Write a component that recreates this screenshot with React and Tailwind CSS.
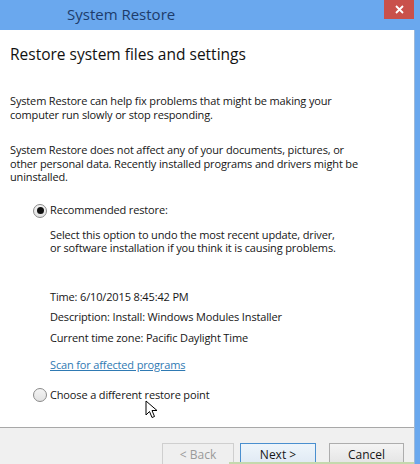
import React from "react";

function Radio({ checked }) {
  return (
    <span className="w-[14px] h-[14px] rounded-full border border-[#8a8a8a] bg-gradient-to-b from-[#f4f4f4] to-[#e2e2e2] flex items-center justify-center shrink-0">
      {checked && <span className="w-[7px] h-[7px] rounded-full bg-[#111]" />}
    </span>
  );
}

export default function App() {
  return (
    <div
      className="w-[420px] h-[464px] relative overflow-hidden bg-[#6aa8ee] flex flex-col text-[#161616]"
      style={{ fontFamily: '"Open Sans", "Noto Sans", sans-serif' }}
    >
      {/* title bar */}
      <div className="h-[30px] shrink-0 flex items-start pl-[67px] pt-[2px]">
        <span className="text-[15px] leading-[24px] text-[#1d3c6b]">System Restore</span>
      </div>
      <div className="absolute right-[6px] top-0 w-[30px] h-[19px] bg-[#c9514b] flex items-center justify-center">
        <svg width="9" height="9" viewBox="0 0 9 9">
          <path d="M1 1 L8 8 M8 1 L1 8" stroke="#fff" strokeWidth="1.8" />
        </svg>
      </div>

      {/* body */}
      <div className="flex-1 flex min-h-0">
        <div className="flex-1 flex flex-col bg-white border-r border-[#9eb9d8] min-w-0">
          <div className="flex-1 flex flex-col pl-[10px] text-[11px] tracking-[-0.15px]">
            <h1 className="mt-[14px] text-[15.5px] leading-[20px] tracking-normal text-[#111]">Restore system files and settings</h1>
            <p className="mt-[30px] leading-[13.5px]">
              System Restore can help fix problems that might be making your
              <br />
              computer run slowly or stop responding.
            </p>
            <p className="mt-[22px] leading-[13.5px]">
              System Restore does not affect any of your documents, pictures, or
              <br />
              other personal data. Recently installed programs and drivers might be
              <br />
              uninstalled.
            </p>
            <div className="mt-[19px] ml-[23px] h-[16px] flex items-center gap-[3px]">
              <Radio checked />
              <span>Recommended restore:</span>
            </div>
            <p className="mt-[9px] ml-[40px] leading-[13.5px]">
              Select this option to undo the most recent update, driver,
              <br />
              or software installation if you think it is causing problems.
            </p>
            <div className="mt-[32px] ml-[40px] leading-[20.5px]">
              <div>Time: 6/10/2015 8:45:42 PM</div>
              <div>Description: Install: Windows Modules Installer</div>
              <div>Current time zone: Pacific Daylight Time</div>
            </div>
            <div className="mt-[7px] ml-[40px] leading-[20px] text-[#2f7ab3] underline">
              Scan for affected programs
            </div>
            <div className="mt-[12px] ml-[23px] h-[16px] flex items-center gap-[3px] relative">
              <Radio />
              <span>Choose a different restore point</span>
              <svg className="absolute left-[112px] top-[13px]" width="13" height="20" viewBox="0 0 13 20">
                <path
                  d="M1 1 L1 15 L4.5 11.5 L7 17.5 L9.5 16.5 L7 10.5 L12 10.5 Z"
                  fill="#fff"
                  stroke="#000"
                  strokeWidth="1"
                  strokeLinejoin="miter"
                />
              </svg>
            </div>
          </div>
          <div className="h-[1px] bg-[#a8a8a8]" />
          <div className="h-[36px] shrink-0 bg-[#f0f0f0] flex items-start justify-end pr-[10px] pt-[15px] text-[12px]">
            <div className="w-[72px] h-[23px] border border-[#cfcfcf] bg-[#efefef] text-[#9a9a9a] flex items-center justify-center">
              &lt; Back
            </div>
            <div className="ml-[6px] w-[76px] h-[23px] border border-[#4a8fcf] bg-gradient-to-b from-[#eef5fb] to-[#dfe9f3] flex items-center justify-center">
              Next &gt;
            </div>
            <div className="ml-[13px] w-[75px] h-[23px] border border-[#adadad] bg-gradient-to-b from-[#f4f4f4] to-[#e3e3e3] flex items-center justify-center">
              Cancel
            </div>
          </div>
        </div>
        <div className="w-[5px] shrink-0" />
      </div>

      <div className="absolute left-[229px] top-[462px] w-[185px] h-[2px] bg-[#c4d9ad]" />
    </div>
  );
}
